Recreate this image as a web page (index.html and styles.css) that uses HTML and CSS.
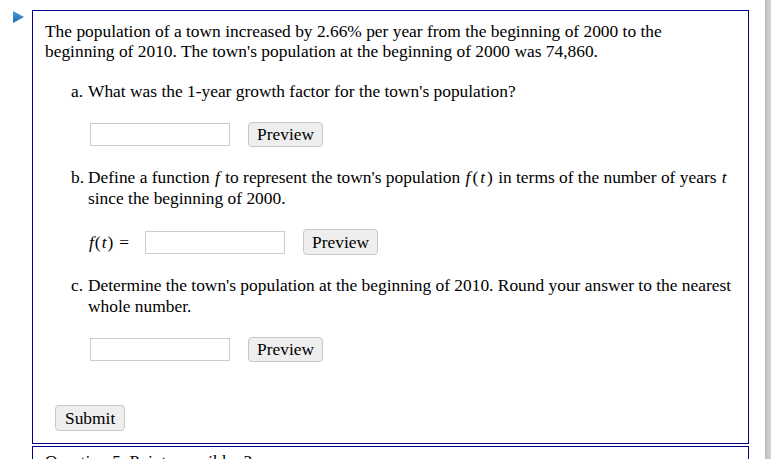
FILE: index.html
```html
<!DOCTYPE html>
<html>
<head>
<meta charset="utf-8">
<link rel="stylesheet" href="styles.css">
</head>
<body>
<div class="page">
  <div class="marker">
    <svg width="12" height="12" viewBox="0 0 12 12">
      <defs>
        <linearGradient id="g" x1="0" y1="0" x2="0" y2="1">
          <stop offset="0" stop-color="#4a9ad8"/>
          <stop offset="1" stop-color="#1f6cb3"/>
        </linearGradient>
      </defs>
      <polygon points="0,0 11,6 0,12" fill="url(#g)"/>
    </svg>
  </div>
  <div class="column">
    <div class="question">
      <p class="intro">The population of a town increased by 2.66% per year from the beginning of 2000 to the beginning of 2010. The town's population at the beginning of 2000 was 74,860.</p>

      <div class="part">
        <span class="label">a.</span>
        <span class="text">What was the 1-year growth factor for the town's population?</span>
      </div>
      <div class="answer">
        <input class="field" type="text">
        <button class="btn">Preview</button>
      </div>

      <div class="part">
        <span class="label">b.</span>
        <span class="text">Define a function <i class="m">f</i> to represent the town's population <span class="mx"><i class="m">f</i>(<i class="m">t</i>)</span> in terms of the number of years <i class="m">t</i> since the beginning of 2000.</span>
      </div>
      <div class="answer answer-fn">
        <span class="fn"><i class="m">f</i>(<i class="m">t</i>)<span class="eq">=</span></span>
        <input class="field" type="text">
        <button class="btn">Preview</button>
      </div>

      <div class="part">
        <span class="label">c.</span>
        <span class="text">Determine the town's population at the beginning of 2010. Round your answer to the nearest whole number.</span>
      </div>
      <div class="answer">
        <input class="field" type="text">
        <button class="btn">Preview</button>
      </div>

      <div class="submit-row">
        <button class="btn btn-submit">Submit</button>
      </div>
    </div>
    <div class="next">
      <span class="next-title">Question 5. Points possible: 3</span>
      <a class="license" href="#">License</a>
    </div>
  </div>
</div>
<div class="scrollbar"></div>
</body>
</html>
```
FILE: styles.css
```css
html, body {
  margin: 0;
  padding: 0;
  overflow: hidden;
  background: #fff;
}
body {
  font-family: "Liberation Serif", "Times New Roman", serif;
  font-size: 17.4px;
  color: #000;
  width: 771px;
  height: 459px;
}
.page {
  display: flex;
  padding-top: 10px;
}
.marker {
  width: 19px;
  padding-left: 13px;
  padding-top: 1px;
  line-height: 0;
}
.column {
  width: 717px;
}
.question {
  border: 1px solid #000088;
  padding: 10px 14px 12px 12px;
}
.intro {
  margin: 0;
  line-height: 20px;
}
.part {
  display: flex;
  margin: 20px 0 0 26px;
  line-height: 21px;
}
.label {
  flex: 0 0 17px;
}
.text {
  flex: 1;
}
.m {
  font-style: italic;
  padding: 0 1px;
}
.mx {
  white-space: nowrap;
  letter-spacing: 1px;
}
.answer {
  display: flex;
  align-items: center;
  height: 25px;
  margin: 20px 0 0 45px;
}
.field {
  box-sizing: border-box;
  width: 140px;
  height: 23px;
  border: 1px solid #cccccc;
  margin: 0 18px 0 0;
  padding: 0 4px;
  background: #fff;
  font-family: inherit;
  font-size: 16px;
}
.btn {
  box-sizing: border-box;
  height: 25px;
  padding: 0 8px;
  background: #eeeeee;
  border: 1px solid #c6c6c6;
  border-radius: 4px;
  font-family: "Liberation Serif", "Times New Roman", serif;
  font-size: 17.4px;
  color: #000;
  line-height: 23px;
}
.answer-fn {
  margin-left: 43px;
  height: 26px;
}
.answer-fn .btn {
  height: 26px;
}
.fn {
  width: 57px;
  white-space: nowrap;
}
.eq {
  margin-left: 6px;
}
.submit-row {
  margin: 43px 0 0 10px;
}
.btn-submit {
  height: 26px;
  padding: 0 9px;
}
.next {
  margin-top: 2px;
  border: 1px solid #000088;
  padding: 4px 12px 0 12px;
  display: flex;
  justify-content: space-between;
  align-items: flex-start;
  line-height: 20px;
}
.license {
  font-family: "Liberation Sans", Arial, sans-serif;
  font-size: 11px;
  color: #3333ee;
  text-decoration: none;
  margin-top: 4px;
  margin-right: 3px;
}
.scrollbar {
  position: fixed;
  top: 0;
  right: 0;
  bottom: 0;
  width: 6px;
  background: linear-gradient(to right, #bcbcbc, #d6d6d6);
}
```
